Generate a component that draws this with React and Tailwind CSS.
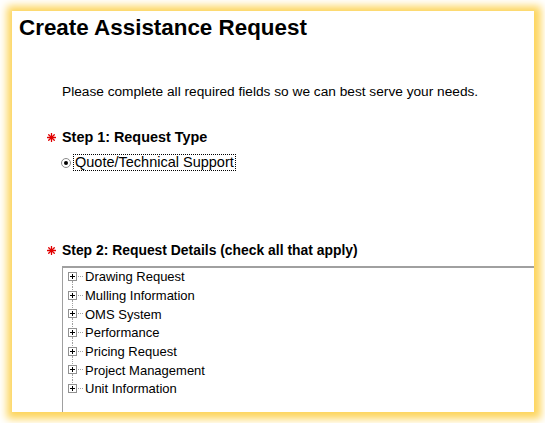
import React from 'react'

const TREE_ITEMS = [
  'Drawing Request',
  'Mulling Information',
  'OMS System',
  'Performance',
  'Pricing Request',
  'Project Management',
  'Unit Information',
]

function RedStar() {
  return (
    <svg width="9" height="9" viewBox="0 0 9 9" className="block">
      <g stroke="#e00000" strokeWidth="1.3" strokeLinecap="round">
        <line x1="4.5" y1="0.5" x2="4.5" y2="8.5" />
        <line x1="0.5" y1="4.5" x2="8.5" y2="4.5" />
        <line x1="1.7" y1="1.7" x2="7.3" y2="7.3" />
        <line x1="7.3" y1="1.7" x2="1.7" y2="7.3" />
      </g>
    </svg>
  )
}

function StepHeading({ children, size = 'text-[14.4px]' }) {
  return (
    <div className="flex items-center h-[16px] pl-[35px]">
      <span className="w-[15px] flex-shrink-0">
        <RedStar />
      </span>
      <span className={`${size} leading-[16px] font-bold text-black`}>{children}</span>
    </div>
  )
}

function TreeRow({ label, first, last }) {
  return (
    <div className="relative flex items-center h-[18.67px] pl-[22px]">
      {/* dotted connector */}
      {!first && (
        <span className="absolute left-[9px] top-0 h-[5px] border-l border-dotted border-[#a0a0a0]" />
      )}
      {!last && (
        <span className="absolute left-[9px] top-[13px] h-[6px] border-l border-dotted border-[#a0a0a0]" />
      )}
      <span className="absolute left-[5px] top-[4px] w-[9px] h-[9px] border border-[#919191] bg-white flex items-center justify-center">
        <svg width="7" height="7" viewBox="0 0 7 7" className="block">
          <path d="M1 3.5h5M3.5 1v5" stroke="#000" strokeWidth="1" />
        </svg>
      </span>
      <span className="absolute left-[15px] top-[8px] w-[5px] border-t border-dotted border-[#a0a0a0]" />
      <span className="text-[13px] leading-[18px] text-black">{label}</span>
    </div>
  )
}

export default function App() {
  return (
    <div
      className="w-[545px] h-[423px] bg-white overflow-hidden pt-[11px] pl-[12px]"
      style={{ fontFamily: '"Liberation Sans", Arial, sans-serif' }}
    >
      <div className="w-[522px] h-[401px] bg-white shadow-[1px_1px_8px_6px_#fdd55c] overflow-hidden">
        <h1 className="mt-[4px] pl-[7px] text-[22.4px] leading-[25px] font-bold text-black">
          Create Assistance Request
        </h1>

        <p className="mt-[44px] pl-[50px] text-[13.7px] leading-[16px] text-black">
          Please complete all required fields so we can best serve your needs.
        </p>

        <div className="mt-[29px]">
          <StepHeading>Step 1: Request Type</StepHeading>
        </div>

        <div className="mt-[9px] pl-[49px] flex items-center h-[17px]">
          <span className="w-[10px] h-[10px] rounded-full border border-[#8a8a8a] bg-white flex items-center justify-center">
            <span className="w-[4px] h-[4px] rounded-full bg-black" />
          </span>
          <span className="ml-[2px] h-[17px] px-[1px] border border-dotted border-black flex items-center text-[14.5px] leading-[15px] text-black">
            Quote/Technical Support
          </span>
        </div>

        <div className="mt-[71px]">
          <StepHeading size="text-[13.9px]">Step 2: Request Details (check all that apply)</StepHeading>
        </div>

        <div className="mt-[8px] ml-[50px] h-[200px] border-t-2 border-l border-t-[#a0a0a0] border-l-[#a0a0a0] bg-white">
          {TREE_ITEMS.map((item, i) => (
            <TreeRow key={item} label={item} first={i === 0} last={i === TREE_ITEMS.length - 1} />
          ))}
        </div>
      </div>
    </div>
  )
}
